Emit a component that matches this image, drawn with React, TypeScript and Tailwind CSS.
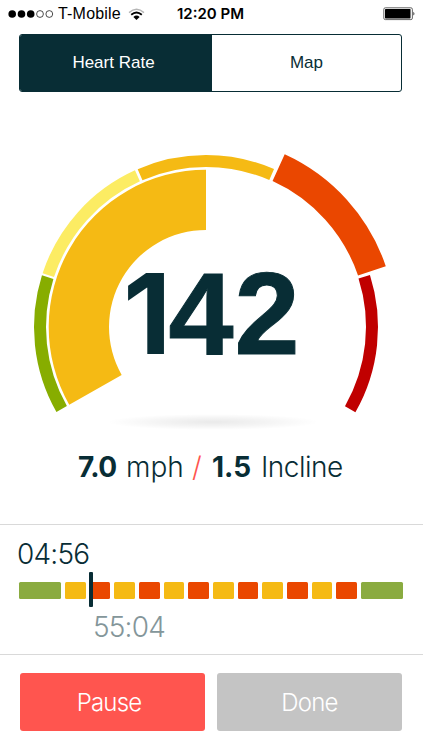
import React from "react";

const CX = 206;
const CY = 227;

const point = (radius: number, degrees: number) => {
  const a = (degrees * Math.PI) / 180;
  return `${(CX + radius * Math.cos(a)).toFixed(2)} ${(CY + radius * Math.sin(a)).toFixed(2)}`;
};

// Ring section between two radii, angles clockwise from the positive x axis.
const ring = (inner: number, outer: number, from: number, to: number) =>
  `M${point(outer, from)}A${outer} ${outer} 0 0 1 ${point(outer, to)}L${point(inner, to)}A${inner} ${inner} 0 0 0 ${point(inner, from)}Z`;

const zones = [
  { d: ring(160, 172, 150.4, 197.5), fill: "#87ad00" },
  { d: ring(160, 172, 198.2, 245.6), fill: "#fcec63" },
  { d: ring(160, 172, 246.6, 293.3), fill: "#f5ba14" },
  { d: ring(160.5, 189.8, 294.5, 341.3), fill: "#ea4700" },
  { d: ring(160, 172, 342.4, 389.7), fill: "#c00000" },
  { d: ring(97, 157.3, 150.4, 270), fill: "#f5ba14" },
];

function StatusBar() {
  return (
    <div className="grid h-[34px] grid-cols-[1fr_auto_1fr] items-start pt-[5px] pr-[8px] pl-[8px] text-black">
      <div className="flex h-[18px] items-center">
        <svg width="46" height="12" viewBox="0 0 46 12">
          <circle cx="4.2" cy="6" r="3.8" />
          <circle cx="13.5" cy="6" r="3.8" />
          <circle cx="22.7" cy="6" r="3.8" />
          <circle cx="32" cy="6" r="3.4" fill="none" stroke="#000" strokeWidth=".7" />
          <circle cx="41.3" cy="6" r="3.4" fill="none" stroke="#000" strokeWidth=".7" />
        </svg>
        <span className="ml-[4px] font-['Liberation_Sans',sans-serif] text-[16px] leading-[18px] tracking-[0.2px]">T-Mobile</span>
        <svg className="ml-[7px]" width="17" height="13" viewBox="0 0 17 13" fill="none" strokeWidth="1.8">
          <path d="M1 4.6Q8.5-2 16 4.6" stroke="#b5b5b5" strokeWidth="1.4" />
          <path d="M3.2 6.8Q8.5 2.2 13.8 6.8" stroke="#000" />
          <path d="M8.5 12L5.4 8.9Q8.5 6.3 11.6 8.9Z" fill="#000" />
        </svg>
      </div>
      <span className="pr-[2px] font-['Inter',sans-serif] text-[15px] leading-[18px] font-semibold">12:20 PM</span>
      <svg className="mt-[2px] justify-self-end" width="32" height="14" viewBox="0 0 32 14">
        <rect x=".8" y=".8" width="28.6" height="11.8" rx="1.5" fill="#fff" stroke="#555" strokeWidth=".9" />
        <rect x="2" y="2" width="25.5" height="9.4" rx=".6" />
        <path d="M30.5 4.8Q32.2 6.7 30.5 8.6Z" />
      </svg>
    </div>
  );
}

function Gauge() {
  return (
    <svg className="block" width="423" height="352" viewBox="0 0 423 352">
      <defs>
        <radialGradient id="shadow">
          <stop offset="0" stopColor="#000" stopOpacity=".085" />
          <stop offset=".5" stopColor="#000" stopOpacity=".045" />
          <stop offset="1" stopColor="#000" stopOpacity="0" />
        </radialGradient>
      </defs>
      {zones.map((zone) => (
        <path key={zone.d} d={zone.d} fill={zone.fill} />
      ))}
      <ellipse cx="213" cy="322" rx="106" ry="8" fill="url(#shadow)" />
      <text y="254" fill="#082d35" className="font-bold">
        <tspan x="123" className="font-['Inter',sans-serif] text-[112px]">1</tspan>
        <tspan x="168.5 234.5" stroke="#082d35" strokeWidth="1" className="font-['Liberation_Sans',sans-serif] text-[117px]">42</tspan>
      </text>
    </svg>
  );
}

const intervals = Array.from({ length: 12 }, (_, i) => (i % 2 ? "bg-[#ea4700]" : "bg-[#f5ba14]"));

function Timeline() {
  return (
    <section className="h-[131px] border-y border-[#d9d9d9] font-['Inter',sans-serif] text-[28px] leading-[34px] font-light tracking-[-0.8px]">
      <p className="mt-[12px] ml-[17px] text-[#082d35]">04:56</p>
      <div className="relative mt-[11px] ml-[19px] flex h-[17px] w-[384px] gap-[4px]">
        <span className="w-[42px] rounded-[1.5px] bg-[#8aab40]" />
        {intervals.map((color, i) => (
          <span key={i} className={`flex-1 rounded-[1.5px] ${color}`} />
        ))}
        <span className="w-[42px] rounded-[1.5px] bg-[#8aab40]" />
        <span className="absolute -top-[10px] left-[70px] h-[35px] w-[4px] rounded-[1px] bg-[#082d35]" />
      </div>
      <p className="mt-[11px] ml-[93px] text-[#84969a]">55:04</p>
    </section>
  );
}

export default function App() {
  return (
    <main className="h-[750px] w-[423px] overflow-hidden bg-white text-[#082d35]">
      <StatusBar />
      <nav className="ml-[19px] grid h-[58px] w-[383px] grid-cols-[192px_1fr] overflow-hidden rounded-[3px] border border-[#082d35] font-['Liberation_Sans',sans-serif] text-[17px]">
        <button className="bg-[#082d35] pr-[5px] text-white">Heart Rate</button>
        <button>Map</button>
      </nav>
      <div className="mt-[8px]">
        <Gauge />
      </div>
      <p className="flex h-[72px] items-start pl-[78px] font-['Inter',sans-serif] text-[28px] leading-[30px] font-light">
        <b className="w-[48px] font-bold tracking-[-0.5px]">7.0</b>
        <span className="w-[66px]">mph</span>
        <span className="w-[20px] text-[#ff554f]">/</span>
        <b className="w-[49px] font-bold">1.5</b>
        <span className="tracking-[-0.5px]">Incline</span>
      </p>
      <Timeline />
      <div className="mt-[18px] ml-[20px] flex gap-[12px] font-['Inter',sans-serif] text-[24px] font-light tracking-[-0.8px] text-white">
        <button className="h-[58px] w-[185px] rounded-[3px] bg-[#ff554f] pt-[2px] pr-[7px]">Pause</button>
        <button className="h-[58px] w-[185px] rounded-[3px] bg-[#c4c4c4] pt-[2px]">Done</button>
      </div>
    </main>
  );
}
